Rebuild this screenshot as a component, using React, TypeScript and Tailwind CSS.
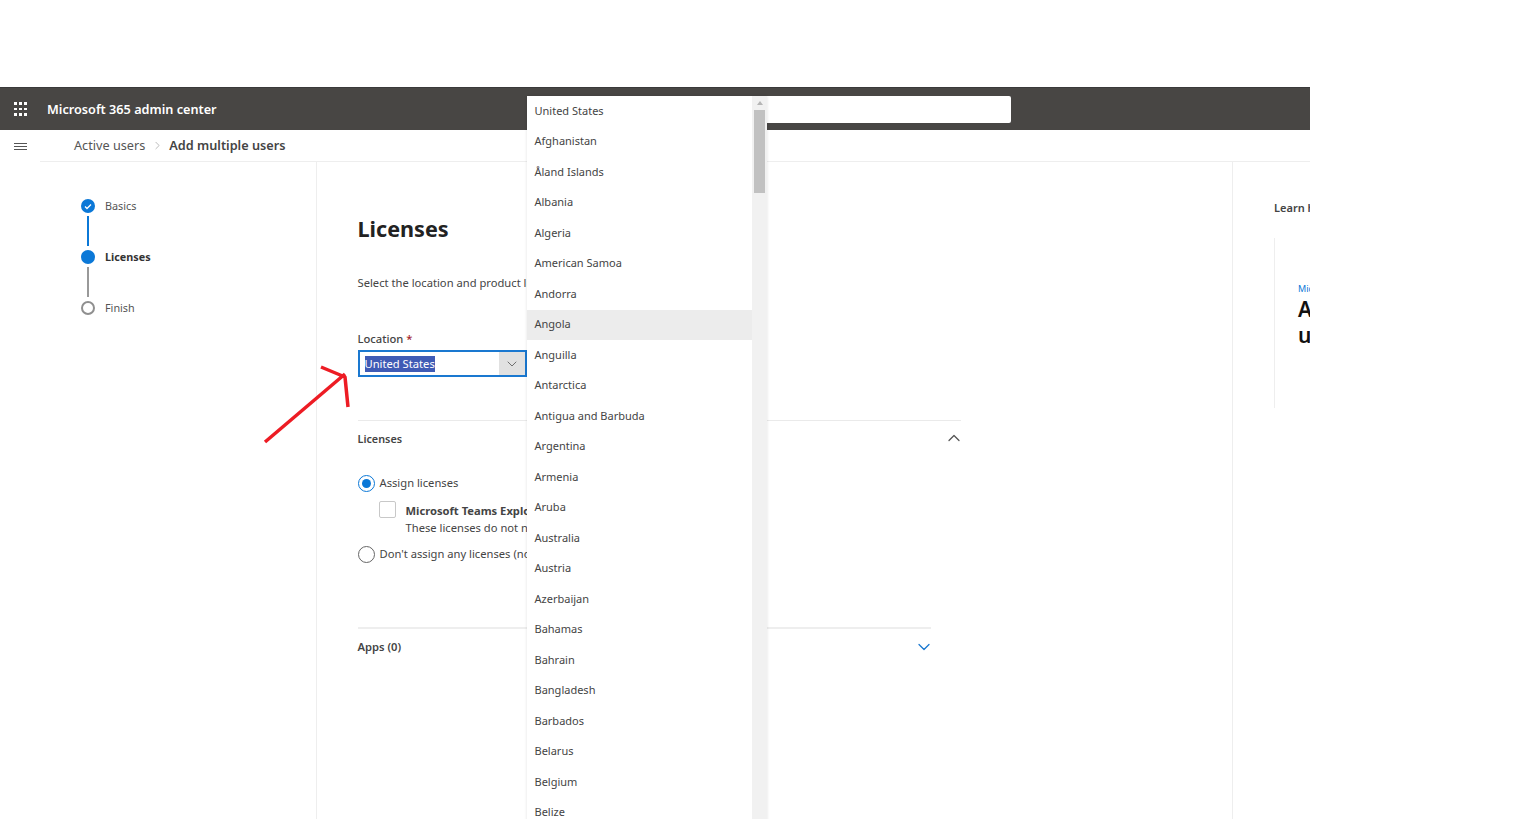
import { ChevronDown, ChevronUp, ChevronRight } from "lucide-react";

const countries = [
  "United States", "Afghanistan", "Åland Islands", "Albania", "Algeria", "American Samoa", "Andorra", "Angola",
  "Anguilla", "Antarctica", "Antigua and Barbuda", "Argentina", "Armenia", "Aruba", "Australia", "Austria",
  "Azerbaijan", "Bahamas", "Bahrain", "Bangladesh", "Barbados", "Belarus", "Belgium", "Belize",
];

function Waffle() {
  return (
    <div className="grid grid-cols-3 gap-[3px] w-[12px]">
      {Array.from({ length: 9 }).map((_, i) => (
        <span key={i} className="w-[2.5px] h-[2.5px] bg-white" />
      ))}
    </div>
  );
}

function Dropdown() {
  return (
    <div className="absolute left-[527px] top-[9px] w-[240px] h-[740px] bg-white flex overflow-hidden shadow-[0_0_3px_rgba(0,0,0,0.12)] z-10">
      <ul className="flex-1 text-[11px] text-[#444]">
        {countries.map((c) => (
          <li key={c} className={`h-[30.5px] pl-[7.5px] pb-[1px] flex items-center ${c === "Angola" ? "bg-[#ececec]" : ""}`}>
            {c}
          </li>
        ))}
      </ul>
      <div className="w-[15px] bg-[#f1f1f1] flex flex-col items-center">
        <span className="mt-[5px] border-x-[3px] border-x-transparent border-b-[4px] border-b-[#b5b5b5]" />
        <span className="mt-[5px] w-[11px] h-[83px] bg-[#c1c1c1]" />
      </div>
    </div>
  );
}

function Stepper() {
  return (
    <aside className="w-[317px] shrink-0 border-r border-[#eeeeee] pl-[81px] pt-[37px] text-[10.8px] text-[#555]">
      <div className="flex items-center gap-[10px] h-[14px]">
        <span className="w-[14px] h-[14px] rounded-full bg-[#0b78d7] flex items-center justify-center">
          <svg width="8" height="7" viewBox="0 0 8 7" fill="none">
            <path d="M1 3.5 3 5.5 7 1.5" stroke="white" strokeWidth="1.3" />
          </svg>
        </span>
        <span>Basics</span>
      </div>
      <div className="ml-[6px] mt-[3px] mb-[4px] w-[2px] h-[30px] bg-[#0b78d7]" />
      <div className="flex items-center gap-[10px] h-[14px]">
        <span className="w-[14px] h-[14px] rounded-full bg-[#0b78d7]" />
        <span className="font-bold text-[#333]">Licenses</span>
      </div>
      <div className="ml-[6px] mt-[3px] mb-[4px] w-[2px] h-[30px] bg-[#999]" />
      <div className="flex items-center gap-[10px] h-[14px]">
        <span className="w-[14px] h-[14px] rounded-full border-2 border-[#8f8f8f]" />
        <span>Finish</span>
      </div>
    </aside>
  );
}

function MainColumn() {
  return (
    <main className="w-[916px] shrink-0 border-r border-[#eeeeee] pl-[40.5px] text-[#444] text-[11.2px] whitespace-nowrap overflow-hidden">
      <h1 className="mt-[52px] h-[30px] leading-[30px] text-[21.6px] font-bold text-[#222]">Licenses</h1>
      <p className="mt-[31px] h-[16px] leading-[16px]">Select the location and product licenses for these users.</p>
      <label className="block mt-[40px] h-[16px] leading-[16px] font-medium text-[#444]">
        Location <span className="text-[#a4262c]">*</span>
      </label>
      <div className="mt-[3px] w-[169px] h-[27px] border-2 border-[#1a78d0] flex items-center bg-white">
        <span className="ml-[5px] bg-[#3f5bb5] text-white leading-[16px]">United States</span>
        <span className="ml-auto w-[26px] h-full bg-[#e1e1e1] flex items-center justify-center">
          <ChevronDown size={16} strokeWidth={1.4} className="text-[#666]" />
        </span>
      </div>
      <section className="mt-[43px] w-[603px] border-t border-[#eaeaea] relative h-[207px]">
        <div className="flex items-center justify-between h-[36px]">
          <span className="font-semibold text-[10.8px]">Licenses</span>
          <ChevronUp size={20} strokeWidth={1.5} className="-mr-[3px] -mt-[3px] text-[#555]" />
        </div>
        <div className="mt-[17px] flex items-center gap-[5px] h-[18px]">
          <span className="w-[17px] h-[17px] rounded-full border border-[#0b78d7] flex items-center justify-center">
            <span className="w-[9px] h-[9px] rounded-full bg-[#0b78d7]" />
          </span>
          <span>Assign licenses</span>
        </div>
        <div className="mt-[9px] ml-[21px] flex gap-[10px]">
          <span className="w-[17px] h-[17px] rounded-[2px] border border-[#c8c8c8] shrink-0" />
          <div className="leading-[17px] pt-[1px]">
            <p className="font-bold">Microsoft Teams Exploratory</p>
            <p>These licenses do not need to be assigned.</p>
          </div>
        </div>
        <div className="mt-[9px] flex items-center gap-[5px] h-[18px]">
          <span className="w-[17px] h-[17px] rounded-full border border-[#666]" />
          <span>Don't assign any licenses (not recommended)</span>
        </div>
      </section>
      <section className="w-[573px] border-t-2 border-[#eeeeee] flex items-center justify-between h-[38px]">
        <span className="font-semibold">Apps (0)</span>
        <ChevronDown size={20} strokeWidth={1.5} className="-mr-[3px] -mt-[1px] text-[#1a78d0]" />
      </section>
    </main>
  );
}

function LearnPanel() {
  return (
    <aside className="flex-1 pl-[41px] whitespace-nowrap overflow-hidden">
      <p className="mt-[38px] h-[16px] leading-[16px] text-[11px] font-semibold text-[#444]">Learn how</p>
      <div className="mt-[22px] h-[170px] border-l border-[#eeeeee] pl-[23px] pt-[45px]">
        <p className="text-[9px] leading-[12px] text-[#0b78d7]">Microsoft</p>
        <p className="mt-[1px] text-[21px] leading-[26px] font-semibold text-[#111]">
          Add
          <br />
          users
        </p>
      </div>
    </aside>
  );
}

export default function App() {
  return (
    <div className="relative h-[819px] overflow-hidden bg-white pt-[87px] font-['Noto_Sans','Open_Sans',sans-serif]">
      <div className="relative w-[1310px] h-[732px] overflow-hidden">
        <header className="h-[43px] bg-[#484644] border-t border-[#3a3a3a] flex items-center pl-[14px] text-white">
          <Waffle />
          <span className="ml-[21px] mt-[1px] text-[12.7px] font-semibold">Microsoft 365 admin center</span>
          <div className="ml-[550px] w-[244px] h-[27px] bg-white rounded-r-[2px]" />
        </header>
        <div className="flex h-[32px]">
          <div className="w-[40px] flex items-center pl-[14px]">
            <div className="w-[13px] flex flex-col gap-[2px]">
              <span className="h-px bg-[#555]" />
              <span className="h-px bg-[#555]" />
              <span className="h-px bg-[#555]" />
            </div>
          </div>
          <nav className="flex-1 border-b border-[#eeeeee] pl-[34px] flex items-center text-[12.7px]">
            <span className="text-[#555]">Active users</span>
            <ChevronRight size={13} strokeWidth={1.2} className="ml-[6px] mr-[5px] text-[#999]" />
            <span className="font-semibold text-[#444]">Add multiple users</span>
          </nav>
        </div>
        <div className="flex h-[657px]">
          <Stepper />
          <MainColumn />
          <LearnPanel />
        </div>
        <Dropdown />
      </div>
      <svg className="absolute left-[260px] top-[360px] z-20" width="95" height="90" viewBox="260 360 95 90" fill="none">
        <path d="M265 442 345 374M321 367 345 377 348 407" stroke="#ed1c24" strokeWidth="3.5" strokeLinejoin="round" />
      </svg>
    </div>
  );
}
